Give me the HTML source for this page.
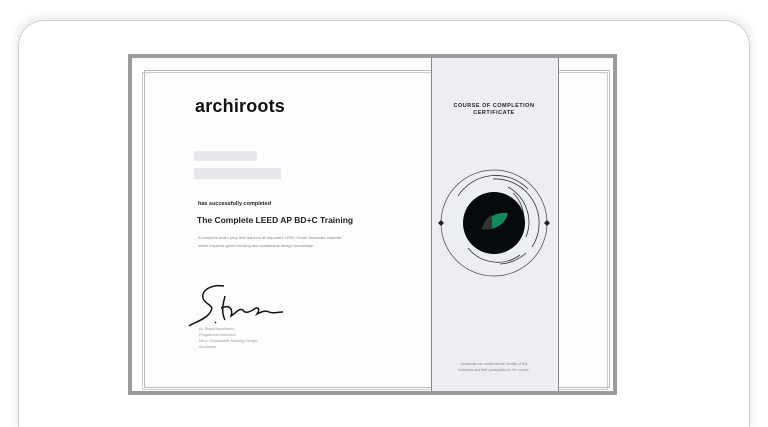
<!DOCTYPE html>
<html style="width:768px;height:427px;overflow:hidden"><head><style>
body{margin:0;width:768px;height:427px;background:#fff;overflow:hidden;position:relative;font-family:"Liberation Sans",sans-serif}
.card{position:absolute;left:18px;top:20px;width:730px;height:407px;border:1px solid #d0d0d0;border-bottom:none;border-radius:26px 26px 0 0;box-shadow:0 -2px 8px 3px #eee;background:#fff}
.cert{position:absolute;left:128px;top:54px;width:481px;height:333px;border:4px solid #9b9b9b;background:#fdfdfd}
.l1{position:absolute;left:12px;top:12px;width:464px;height:316px;border:1px solid #bbb}
.l2{position:absolute;left:10px;top:14px;width:464px;height:316px;border:1px solid #ccc}
.panel{position:absolute;left:299px;top:0;width:126px;height:333px;background:#eceef1;border-left:1px solid #888;border-right:1px solid #888}
.abs{position:absolute}
</style></head><body>
<div class="card"></div>
<div class="cert">
<div class="l2"></div><div class="l1"></div>
<div class="panel"></div>
<div class="abs" style="left:63px;top:38px;font-size:18px;font-weight:bold;color:#111;letter-spacing:0.2px">archiroots</div>
<div class="abs" style="left:62px;top:93px;width:63px;height:10px;background:#e6e8ec"></div>
<div class="abs" style="left:62px;top:110px;width:87px;height:11px;background:#e6e8ec"></div>
<div class="abs" style="left:66px;top:143px;font-size:5.5px;font-weight:bold;color:#222">has successfully completed</div>
<div class="abs" style="left:65px;top:157px;font-size:8.5px;font-weight:bold;color:#222">The Complete LEED AP BD+C Training</div>
<div class="abs" style="left:66px;top:176px;font-size:4px;color:#888;line-height:8px">A complete exam prep that teaches all important LEED Green Associate material,<br>which expands green building and sustainable design knowledge.</div>
<svg class="abs" style="left:55px;top:224px" width="110" height="50" viewBox="0 0 110 50"><path d="M37 4 C25 2 14 8 16 16 C18 24 30 22 22 32 C17 38 8 40 2 44 M28 40 l1 1 M38 14 C36 22 34 30 38 38 M34 26 C44 22 46 28 44 34 C50 30 52 26 56 28 C58 32 62 30 66 28 C70 24 74 26 70 32 C74 30 78 28 82 30 C86 32 90 30 96 30" fill="none" stroke="#111" stroke-width="1.5"/></svg>
<div class="abs" style="left:67px;top:268px;font-size:3.8px;color:#999;line-height:6px">Ar. Shadi Abouttaimo<br>Programme Instructor,<br>MA in Sustainable Building Design,<br>Archiroots</div>
<div class="abs" style="left:299px;top:45px;width:126px;text-align:center;font-size:5.5px;font-weight:bold;color:#222;letter-spacing:0.5px;line-height:7px">COURSE OF COMPLETION<br>CERTIFICATE</div>
<svg class="abs" style="left:306px;top:109px" width="112" height="112" viewBox="0 0 112 112">
<circle cx="56" cy="56" r="53" fill="none" stroke="#444" stroke-width="0.7"/>
<path d="M20 29 A45 45 0 0 1 90 22" fill="none" stroke="#333" stroke-width="0.8"/>
<path d="M55 12 A44 44 0 0 1 94 80" fill="none" stroke="#333" stroke-width="0.8"/>
<path d="M70 20 A40 40 0 0 1 88 70" fill="none" stroke="#333" stroke-width="0.8"/>
<path d="M75 26 A36 36 0 0 1 82 68" fill="none" stroke="#333" stroke-width="0.8"/>
<path d="M30 81 A38 38 0 0 0 82 88" fill="none" stroke="#333" stroke-width="0.8"/>
<path d="M62 97 A42 42 0 0 0 88 86" fill="none" stroke="#333" stroke-width="0.8"/>
<circle cx="56" cy="56" r="31" fill="#050a0d"/>
<path d="M44 62 C48 50 58 45 70 46 C68 56 58 64 44 62Z" fill="#0f8a5a"/>
<path d="M44 62 C46 54 50 50 54 48 L54 62Z" fill="#333"/>
<path d="M0 56 l3-3 3 3-3 3z M106 56 l3-3 3 3-3 3z" fill="#222"/>
</svg>
<div class="abs" style="left:299px;top:303px;width:126px;text-align:center;font-size:3.5px;color:#888;line-height:6px">Archiroots has confirmed the identity of this<br>individual and their participation in the course.</div>
</div>
</body></html>
